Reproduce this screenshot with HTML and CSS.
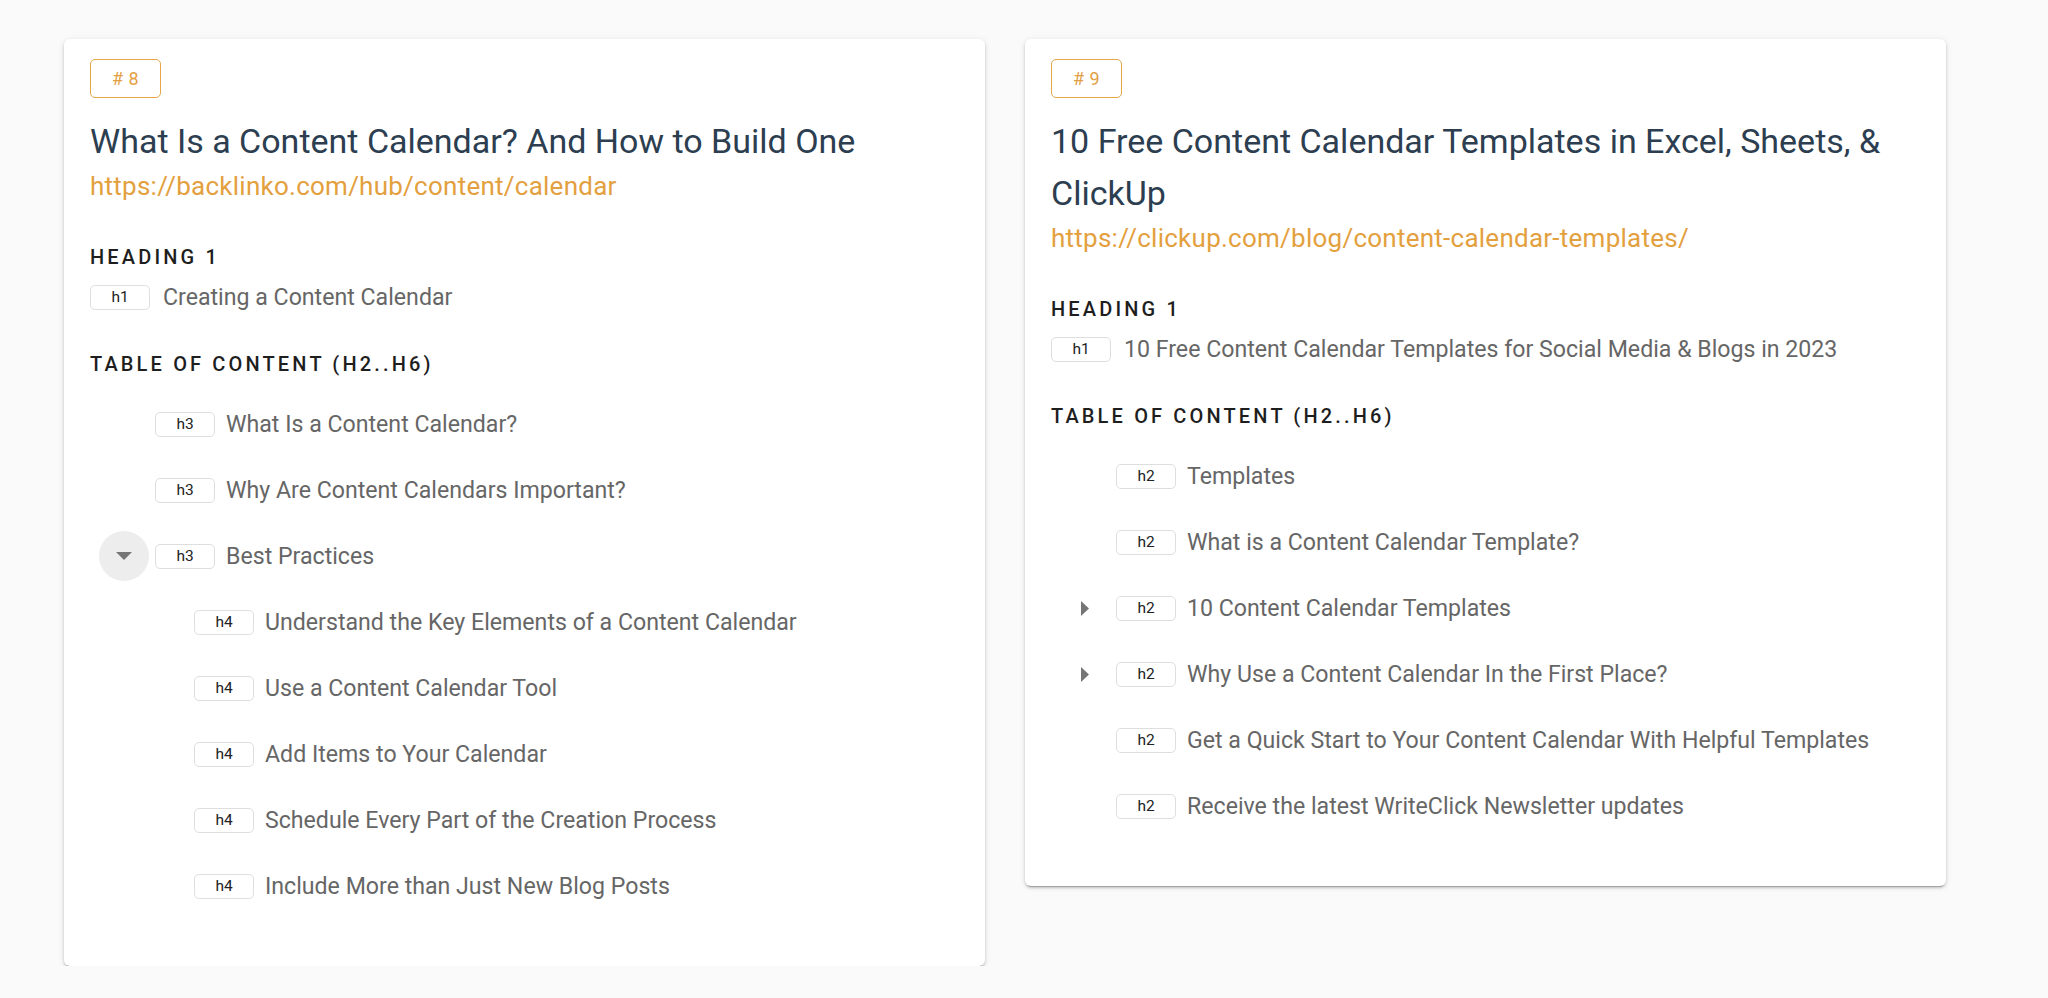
FILE: index.html
```html
<!DOCTYPE html>
<html lang="en">
<head>
<meta charset="utf-8">
<title>Content outlines</title>
<link rel="stylesheet" href="styles.css">
</head>
<body>
<main class="grid">
  <article class="card">
    <div class="rank">#&nbsp;8</div>
    <h2 class="title">What Is a Content Calendar? And How to Build One</h2>
    <a class="url" href="#">https://backlinko.com/hub/content/calendar</a>
    <h3 class="section">Heading 1</h3>
    <div class="h1-row"><span class="tag">h1</span><span class="text">Creating a Content Calendar</span></div>
    <h3 class="section toc-title">Table of content (H2..H6)</h3>
    <ul class="toc">
      <li class="node lvl-1"><span class="toggle"></span><span class="tag">h3</span><span class="text">What Is a Content Calendar?</span></li>
      <li class="node lvl-1"><span class="toggle"></span><span class="tag">h3</span><span class="text">Why Are Content Calendars Important?</span></li>
      <li class="node lvl-1"><span class="toggle open"><svg width="16" height="8" viewBox="0 0 16 8"><path d="M0 0H16L8 8Z" fill="#757575"/></svg></span><span class="tag">h3</span><span class="text">Best Practices</span></li>
      <li class="node lvl-2"><span class="toggle"></span><span class="tag">h4</span><span class="text">Understand the Key Elements of a Content Calendar</span></li>
      <li class="node lvl-2"><span class="toggle"></span><span class="tag">h4</span><span class="text">Use a Content Calendar Tool</span></li>
      <li class="node lvl-2"><span class="toggle"></span><span class="tag">h4</span><span class="text">Add Items to Your Calendar</span></li>
      <li class="node lvl-2"><span class="toggle"></span><span class="tag">h4</span><span class="text">Schedule Every Part of the Creation Process</span></li>
      <li class="node lvl-2"><span class="toggle"></span><span class="tag">h4</span><span class="text">Include More than Just New Blog Posts</span></li>
    </ul>
  </article>

  <article class="card">
    <div class="rank">#&nbsp;9</div>
    <h2 class="title">10 Free Content Calendar Templates in Excel, Sheets, &amp; ClickUp</h2>
    <a class="url" href="#">https://clickup.com/blog/content-calendar-templates/</a>
    <h3 class="section">Heading 1</h3>
    <div class="h1-row"><span class="tag">h1</span><span class="text">10 Free Content Calendar Templates for Social Media &amp; Blogs in 2023</span></div>
    <h3 class="section toc-title">Table of content (H2..H6)</h3>
    <ul class="toc">
      <li class="node lvl-1"><span class="toggle"></span><span class="tag">h2</span><span class="text">Templates</span></li>
      <li class="node lvl-1"><span class="toggle"></span><span class="tag">h2</span><span class="text">What is a Content Calendar Template?</span></li>
      <li class="node lvl-1"><span class="toggle"><svg width="8" height="15" viewBox="0 0 8 15"><path d="M0 0V15L8 7.5Z" fill="#757575"/></svg></span><span class="tag">h2</span><span class="text">10 Content Calendar Templates</span></li>
      <li class="node lvl-1"><span class="toggle"><svg width="8" height="15" viewBox="0 0 8 15"><path d="M0 0V15L8 7.5Z" fill="#757575"/></svg></span><span class="tag">h2</span><span class="text">Why Use a Content Calendar In the First Place?</span></li>
      <li class="node lvl-1"><span class="toggle"></span><span class="tag">h2</span><span class="text">Get a Quick Start to Your Content Calendar With Helpful Templates</span></li>
      <li class="node lvl-1"><span class="toggle"></span><span class="tag">h2</span><span class="text">Receive the latest WriteClick Newsletter updates</span></li>
    </ul>
  </article>
</main>
</body>
</html>
```

FILE: styles.css
```css
* { box-sizing: border-box; }

html, body {
  margin: 0;
  background: #fafafa;
  font-family: Roboto, "Liberation Sans", Arial, sans-serif;
}

.grid {
  display: grid;
  grid-template-columns: 921px 921px;
  column-gap: 40px;
  align-items: start;
  padding: 39px 0 0 64px;
}

.card {
  background: #fff;
  border-radius: 6px;
  padding: 20px 26px 47px 26px;
  box-shadow: 0 3px 1px -2px rgba(0,0,0,.22), 0 2px 3px 0 rgba(0,0,0,.16), 0 1px 6px 0 rgba(0,0,0,.10);
  display: flex;
  flex-direction: column;
  align-items: flex-start;
}

.rank {
  width: 71px;
  height: 39px;
  border: 1px solid #e6a74a;
  border-radius: 5px;
  color: #e3a043;
  font-size: 18px;
  display: flex;
  align-items: center;
  justify-content: center;
  letter-spacing: 0.5px;
}

.title {
  margin: 17px 0 0 0;
  font-size: 34px;
  line-height: 52px;
  font-weight: 400;
  color: #2c3e50;
}

.url {
  font-size: 26px;
  line-height: 38px;
  letter-spacing: 0.25px;
  color: #e3a03e;
  text-decoration: none;
}

.section {
  margin: 38px 0 0 0;
  font-size: 20px;
  line-height: 28px;
  font-weight: 500;
  letter-spacing: 3.15px;
  text-transform: uppercase;
  color: #1e1e1e;
}

.toc-title { margin-top: 35px; }

.h1-row {
  margin-top: 8px;
  height: 36px;
  display: flex;
  align-items: center;
  gap: 13px;
}

.tag {
  flex: none;
  width: 60px;
  height: 25px;
  border: 1px solid #dedede;
  border-radius: 5px;
  display: flex;
  align-items: center;
  justify-content: center;
  font-size: 15.5px;
  color: #222;
}

.text {
  font-size: 23.15px;
  color: #666;
  white-space: nowrap;
}

.toc {
  list-style: none;
  margin: 13px 0 0 0;
  padding: 0;
  align-self: stretch;
}

.node {
  height: 66px;
  display: flex;
  align-items: center;
}

.lvl-1 { padding-left: 9px; }
.lvl-2 { padding-left: 48px; }

.toggle {
  flex: none;
  width: 50px;
  height: 50px;
  border-radius: 50%;
  margin-right: 6px;
  display: flex;
  align-items: center;
  justify-content: center;
}

.toggle.open { background: #ededed; }

.node .tag { margin-right: 11px; }
```
